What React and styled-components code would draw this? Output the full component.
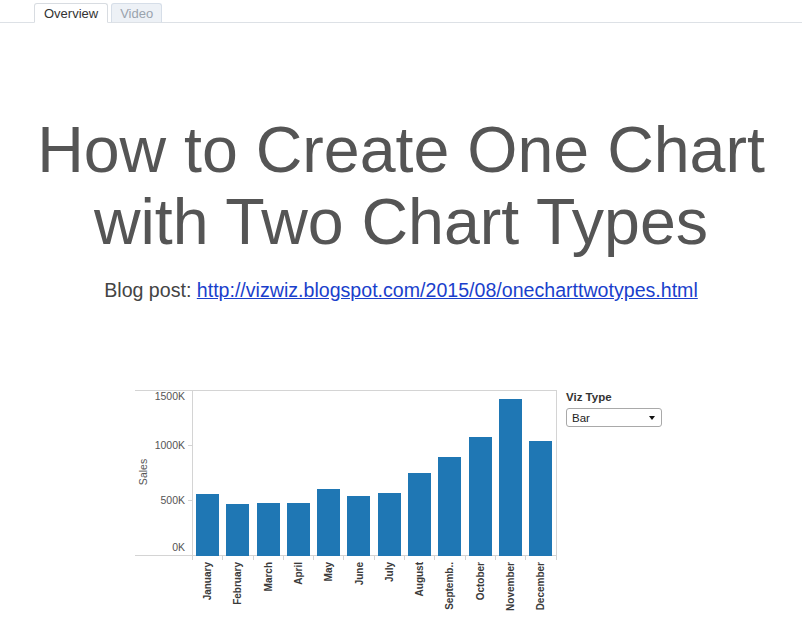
import React, { useState } from "react";
import styled, { createGlobalStyle } from "styled-components";

const GlobalStyle = createGlobalStyle`
  html, body {
    margin: 0;
    padding: 0;
    background: #ffffff;
    font-family: "Liberation Sans", Arial, sans-serif;
  }
`;

const sales = [
  { month: "January", value: 564 },
  { month: "February", value: 473 },
  { month: "March", value: 482 },
  { month: "April", value: 482 },
  { month: "May", value: 609 },
  { month: "June", value: 545 },
  { month: "July", value: 573 },
  { month: "August", value: 755 },
  { month: "Septemb..", value: 900 },
  { month: "October", value: 1082 },
  { month: "November", value: 1427 },
  { month: "December", value: 1045 },
];

const Page = styled.div`
  width: 802px;
  min-height: 622px;
  color: #555;
`;

const TabBar = styled.div`
  display: flex;
  align-items: flex-end;
  gap: 3px;
  height: 23px;
  padding-left: 34px;
  border-bottom: 1px solid #dde1e6;
  box-sizing: border-box;
`;

const Tab = styled.div`
  height: 20px;
  box-sizing: border-box;
  padding: 0 ${(p) => (p.$active ? "9px" : "8px")};
  margin-bottom: -1px;
  font-size: 13px;
  line-height: 19px;
  border: 1px solid ${(p) => (p.$active ? "#d8dce1" : "#d6dee8")};
  border-bottom-color: ${(p) => (p.$active ? "#ffffff" : "#dde1e6")};
  border-radius: 3px 3px 0 0;
  background: ${(p) => (p.$active ? "#ffffff" : "#edf1f6")};
  color: ${(p) => (p.$active ? "#333" : "#9aa3ad")};
`;

const Title = styled.h1`
  margin: 91px 0 0;
  text-align: center;
  font-weight: normal;
  font-size: 64.5px;
  line-height: 72px;
  color: #555;
`;

const Blog = styled.p`
  margin: 20px 0 0;
  text-align: center;
  font-size: 19.6px;
  line-height: 24px;
  color: #444;

  a {
    color: #1a3fcc;
    text-decoration: underline;
  }
`;

const ChartRow = styled.div`
  display: flex;
  align-items: flex-start;
  gap: 9px;
  margin-top: 88px;
  padding-left: 135px;
`;

const Legend = styled.div`
  display: flex;
  flex-direction: column;
  gap: 4px;
  padding-top: 1px;
`;

const LegendTitle = styled.div`
  font-size: 11.5px;
  font-weight: bold;
  color: #333;
  line-height: 13px;
`;

const Select = styled.div`
  width: 96px;
  height: 19px;
  box-sizing: border-box;
  border: 1px solid #a9a9a9;
  border-radius: 3px;
  display: flex;
  align-items: center;
  justify-content: space-between;
  padding: 0 6px 0 5px;
  font-size: 11.5px;
  color: #222;
  background: #fff;
`;

const Caret = styled.span`
  width: 0;
  height: 0;
  border-left: 3.5px solid transparent;
  border-right: 3.5px solid transparent;
  border-top: 4px solid #111;
`;

const W = 422;
const AX = 57.5;
const PH = 165;
const colW = (W - 1 - AX) / 12;
const scale = PH / 1500;

function SalesChart() {
  return (
    <svg width={W} height={225} style={{ display: "block" }}>
      <g stroke="#d4d4d4" strokeWidth="1" shapeRendering="crispEdges">
        <line x1="0" y1="0.5" x2={W} y2="0.5" />
        <line x1="0" y1={PH + 0.5} x2={W} y2={PH + 0.5} />
        <line x1={AX} y1="0" x2={AX} y2={PH + 5} />
        <line x1={W - 0.5} y1="0" x2={W - 0.5} y2={PH + 5} />
        <line x1={AX - 5} y1={PH - 1000 * scale + 0.5} x2={AX} y2={PH - 1000 * scale + 0.5} />
        <line x1={AX - 5} y1={PH - 500 * scale + 0.5} x2={AX} y2={PH - 500 * scale + 0.5} />
        {sales.map((_, i) =>
          i === 0 ? null : (
            <line key={i} x1={AX + i * colW} y1={PH} x2={AX + i * colW} y2={PH + 5} />
          )
        )}
      </g>
      <g fontFamily="Liberation Sans, Arial, sans-serif" fontSize="10.5" fill="#555" textAnchor="end">
        <text x="50" y="10">1500K</text>
        <text x="50" y="59">1000K</text>
        <text x="50" y="114">500K</text>
        <text x="50" y="161">0K</text>
      </g>
      <text
        transform="translate(12,82) rotate(-90)"
        textAnchor="middle"
        fontFamily="Liberation Sans, Arial, sans-serif"
        fontSize="10.5"
        fill="#555"
      >
        Sales
      </text>
      {sales.map((d, i) => {
        const h = Math.round(d.value * scale);
        const x = Math.round(AX + 3.5 + i * colW);
        return <rect key={d.month} x={x} y={PH + 1 - h} width="23" height={h} fill="#1f77b4" />;
      })}
      {sales.map((d, i) => {
        const cx = AX + i * colW + colW / 2;
        return (
          <text
            key={d.month}
            transform={`translate(${cx + 3.5},172) rotate(-90)`}
            textAnchor="end"
            fontFamily="Liberation Sans, Arial, sans-serif"
            fontSize="10"
            fontWeight="bold"
            fill="#3a3a3a"
          >
            {d.month}
          </text>
        );
      })}
    </svg>
  );
}

export default function App() {
  const [tab] = useState("Overview");
  return (
    <Page>
      <GlobalStyle />
      <TabBar>
        <Tab $active={tab === "Overview"}>Overview</Tab>
        <Tab $active={tab === "Video"}>Video</Tab>
      </TabBar>
      <Title>
        How to Create One Chart
        <br />
        with Two Chart Types
      </Title>
      <Blog>
        Blog post:{" "}
        <a href="#post">http://vizwiz.blogspot.com/2015/08/onecharttwotypes.html</a>
      </Blog>
      <ChartRow>
        <SalesChart />
        <Legend>
          <LegendTitle>Viz Type</LegendTitle>
          <Select>
            <span>Bar</span>
            <Caret />
          </Select>
        </Legend>
      </ChartRow>
    </Page>
  );
}
